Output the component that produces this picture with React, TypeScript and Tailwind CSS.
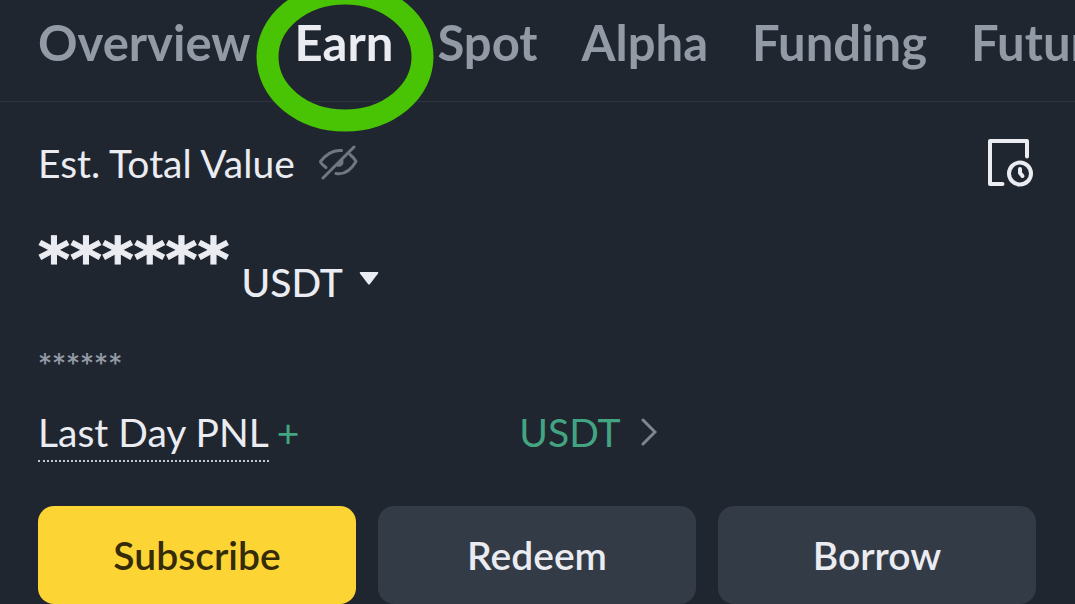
const tabs = ["Overview", "Earn", "Spot", "Alpha", "Funding", "Futures"];

const actions = [
  { label: "Subscribe", style: "bg-[#fcd535] text-[#352b06]" },
  { label: "Redeem", style: "bg-[#333b47] text-[#eaecf2]" },
  { label: "Borrow", style: "bg-[#333b47] text-[#eaecf2]" },
];

function Highlight() {
  return (
    <svg
      className="absolute left-1/2 top-1/2 h-[150px] w-[180px] -translate-x-1/2 -translate-y-[60px] pointer-events-none"
      viewBox="0 0 180 150"
      fill="none"
      aria-hidden="true"
    >
      <ellipse cx="91" cy="75" rx="77.5" ry="63.5" stroke="#48c404" strokeWidth="22" />
    </svg>
  );
}

function EyeOffIcon() {
  return (
    <svg className="h-9 w-10" viewBox="0 0 40 36" fill="none" stroke="#6f7783" strokeWidth="3" strokeLinecap="round" strokeLinejoin="round" aria-hidden="true">
      <path d="M22.500 5.500C13.500 4.500 6.500 10 1.500 16.500c0 1.500 3.500 4.500 5.500 6" />
      <path d="M31 9.500c2.500 2 4.500 4.500 6 7C32 25 25.500 30 17 28.500" />
      <path d="M35 2 4 33" />
      <path d="M18.500 20c2.500 1 5-.5 4.500-4z" fill="#6f7783" />
    </svg>
  );
}

function HistoryIcon() {
  return (
    <svg className="h-[50px] w-[50px]" viewBox="0 0 50 50" fill="none" stroke="#eaecf2" strokeWidth="4" strokeLinecap="round" strokeLinejoin="round" aria-hidden="true">
      <path d="M16.500 46H4V3h37v15.500" />
      <circle cx="34" cy="35.500" r="11" />
      <path d="M34 31v4l2.500 3" />
    </svg>
  );
}

export default function App() {
  return (
    <div className="min-h-screen overflow-hidden bg-[#202630] font-['Lato',sans-serif] text-[#eaecf2]">
      <nav className="flex h-[102px] items-start gap-11 border-b border-[#2d3440] pl-[38px] pt-3">
        {tabs.map((tab) => (
          <button
            key={tab}
            type="button"
            className={`relative shrink-0 text-[49px] font-bold leading-[60px] ${
              tab === "Earn" ? "text-[#eaecf2]" : "text-[#929aa5]"
            }`}
          >
            {tab}
            {tab === "Earn" && <Highlight />}
          </button>
        ))}
      </nav>

      <main className="pl-[38px] pr-[39px] pt-9">
        <div className="flex h-[50px] items-center justify-between">
          <div className="flex items-center gap-6">
            <h1 className="text-[39px] leading-[48px]">Est. Total Value</h1>
            <button type="button" aria-label="Show balance">
              <EyeOffIcon />
            </button>
          </div>
          <button type="button" aria-label="History">
            <HistoryIcon />
          </button>
        </div>

        <div className="mt-10 flex h-[78px] items-end gap-3">
          <span className="self-start font-['DejaVu_Sans',sans-serif] text-[61px] font-bold leading-[64px] [-webkit-text-stroke:1px_#eaecf2]">******</span>
          <button type="button" className="flex items-center gap-4 text-[39px] font-medium leading-[48px]">
            USDT
            <svg className="h-6 w-5" viewBox="0 0 20 24" fill="#eaecf2" aria-hidden="true">
              <path d="M1.500 2h17q1.500 0 .5 1.500L11 14q-1 1-2 0L1 3.500Q0 2 1.500 2Z" />
            </svg>
          </button>
        </div>

        <p className="mt-[42px] font-['Inter',sans-serif] text-[28px] leading-8 text-[#929aa5]">******</p>

        <div className="mt-7 flex h-[54px] items-start text-[39px] leading-[48px]">
          <span className="border-b-2 border-dotted border-[#c4c8d0] pb-1">Last Day PNL</span>
          <span className="ml-2 text-[#43a482]">+</span>
          <button type="button" className="ml-[220px] flex items-center gap-5 text-[#43a482]">
            USDT
            <svg className="h-7 w-4" viewBox="0 0 16 28" fill="none" stroke="#7d8590" strokeWidth="3" strokeLinecap="round" aria-hidden="true">
              <path d="m2 2 12 12L2 26" />
            </svg>
          </button>
        </div>

        <div className="mt-11 grid grid-cols-3 gap-[22px]">
          {actions.map((action) => (
            <button
              key={action.label}
              type="button"
              className={`h-[98px] rounded-2xl text-[39px] font-semibold leading-[48px] ${action.style}`}
            >
              {action.label}
            </button>
          ))}
        </div>
      </main>
    </div>
  );
}
